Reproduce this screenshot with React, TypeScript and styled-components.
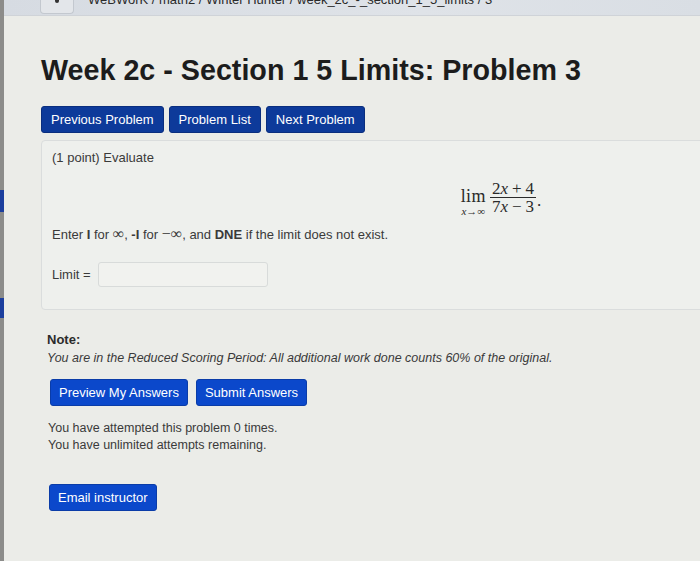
import styled, { createGlobalStyle } from "styled-components";

const GlobalStyle = createGlobalStyle`
  html, body {
    margin: 0;
    padding: 0;
    overflow: hidden;
  }
  body {
    width: 700px;
    height: 561px;
    background: #ebece8;
    font-family: "Liberation Sans", Arial, sans-serif;
    color: #3a3a3a;
  }
`;

const Page = styled.div`
  display: flex;
  height: 561px;
`;

const Gutter = styled.div`
  flex: none;
  width: 4px;
  background: linear-gradient(
    to bottom,
    #8c8c8a 0 190px,
    #1c3f9e 190px 212px,
    #8c8c8a 212px 298px,
    #1c3f9e 298px 318px,
    #8c8c8a 318px
  );
`;

const Column = styled.div`
  flex: 1;
  min-width: 0;
  display: flex;
  flex-direction: column;
`;

const TopBar = styled.div`
  height: 15px;
  flex: none;
  display: flex;
  align-items: flex-start;
  padding-left: 36px;
  overflow: hidden;
  background: linear-gradient(to right, #d6dbe2, #dfe3e8 60%, #d9dee4);
  box-shadow: 0 1px 0 #cfd3d8;
`;

const BarButton = styled.div`
  flex: none;
  width: 32px;
  height: 13px;
  display: flex;
  justify-content: center;
  background: #e3e6ea;
  border: 1px solid #c3c8cf;
  border-top: none;
  border-radius: 0 0 4px 4px;
`;

const BarGlyph = styled.span`
  width: 4px;
  height: 3px;
  background: #333;
  border-radius: 0 0 2px 2px;
`;

const Crumb = styled.div`
  margin-left: 14px;
  margin-top: -7px;
  font-size: 13px;
  line-height: 13px;
  white-space: nowrap;
  color: #2a2a2a;
`;

const Content = styled.div`
  width: 920px;
  padding-left: 37px;
`;

const Title = styled.h1`
  margin: 37px 0 0;
  font-size: 28.7px;
  line-height: 36px;
  font-weight: bold;
  color: #1c1c1c;
`;

const ButtonRow = styled.div<{ $top: number; $indent?: number; $gap?: number }>`
  display: flex;
  gap: ${(p) => p.$gap ?? 5}px;
  margin-top: ${(p) => p.$top}px;
  padding-left: ${(p) => p.$indent ?? 0}px;
`;

const Button = styled.button<{ $tone: "nav" | "action" }>`
  height: 27px;
  padding: 0 ${(p) => (p.$tone === "nav" ? 9 : 8)}px;
  font-family: "Liberation Sans", Arial, sans-serif;
  font-size: 13px;
  color: #fff;
  border-radius: 3px;
  cursor: pointer;
  background: ${(p) => (p.$tone === "nav" ? "#0d3a9a" : "#0b48cb")};
  border: 1px solid ${(p) => (p.$tone === "nav" ? "#0a2e7e" : "#0a3ca8")};
`;

const ProblemBox = styled.div`
  margin-top: 7px;
  height: 170px;
  box-sizing: border-box;
  padding: 8px 10px;
  background: #eef0ed;
  border: 1px solid #dadddd;
  border-radius: 4px;
`;

const Line = styled.div<{ $top?: number }>`
  font-size: 13px;
  line-height: 18px;
  margin-top: ${(p) => p.$top ?? 0}px;
  white-space: nowrap;
`;

const MathDisplay = styled.div`
  display: flex;
  justify-content: center;
  align-items: flex-start;
  height: 36px;
  margin-top: 13px;
  font-family: "Liberation Serif", "Times New Roman", serif;
  color: #2a2a2a;
`;

const LimBlock = styled.div`
  display: flex;
  flex-direction: column;
  align-items: center;
  margin-top: 9px;
  margin-right: 3px;
`;

const Lim = styled.span`
  font-size: 18px;
  line-height: 15px;
  letter-spacing: 0.4px;
`;

const Sub = styled.span`
  font-size: 11px;
  line-height: 12px;
  margin-top: 1px;
`;

const Fraction = styled.div`
  display: flex;
  flex-direction: column;
  align-items: stretch;
  text-align: center;
  padding: 0 1px;
`;

const FracPart = styled.span<{ $bar?: boolean }>`
  font-size: 17px;
  line-height: 17px;
  padding: 0 2px;
  border-top: ${(p) => (p.$bar ? "1px solid #2a2a2a" : "none")};
`;

const Op = styled.span`
  margin: 0 4px;
`;

const Period = styled.span`
  font-size: 17px;
  margin-top: 11px;
`;

const Var = styled.i`
  font-family: "Liberation Serif", serif;
`;

const Sym = styled.span`
  font-family: "Liberation Serif", "DejaVu Serif", serif;
  font-size: 16px;
`;

const LimitRow = styled.div`
  display: flex;
  align-items: center;
  gap: 7px;
  margin-top: 18px;
  font-size: 13px;
`;

const AnswerInput = styled.input`
  width: 170px;
  height: 25px;
  box-sizing: border-box;
  background: #f1f2ef;
  border: 1px solid #d8dbda;
  border-radius: 3px;
`;

const Footer = styled.div`
  padding-left: 6px;
`;

const Note = styled.div`
  margin-top: 21px;
  font-size: 13px;
  line-height: 18px;
  font-weight: bold;
  color: #2b2b2b;
`;

const Italic = styled.div`
  font-size: 12.5px;
  line-height: 18px;
  font-style: italic;
  white-space: nowrap;
`;

const Attempts = styled.div`
  margin-top: 14px;
  font-size: 12.5px;
  line-height: 17px;
  padding-left: 1px;
`;

export default function App() {
  return (
    <>
      <GlobalStyle />
      <Page>
        <Gutter />
        <Column>
          <TopBar>
            <BarButton>
              <BarGlyph />
            </BarButton>
            <Crumb>WeBWorK / math2 / Winter Hunter / week_2c_-_section_1_5_limits / 3</Crumb>
          </TopBar>
          <Content>
            <Title>Week 2c - Section 1 5 Limits: Problem 3</Title>
            <ButtonRow $top={18}>
              <Button $tone="nav">Previous Problem</Button>
              <Button $tone="nav">Problem List</Button>
              <Button $tone="nav">Next Problem</Button>
            </ButtonRow>
            <ProblemBox>
              <Line>(1 point) Evaluate</Line>
              <MathDisplay>
                <LimBlock>
                  <Lim>lim</Lim>
                  <Sub>
                    <Var>x</Var>→∞
                  </Sub>
                </LimBlock>
                <Fraction>
                  <FracPart>
                    2<Var>x</Var>
                    <Op>+</Op>4
                  </FracPart>
                  <FracPart $bar>
                    7<Var>x</Var>
                    <Op>−</Op>3
                  </FracPart>
                </Fraction>
                <Period>.</Period>
              </MathDisplay>
              <Line $top={9}>
                Enter <b>I</b> for <Sym>∞</Sym>, <b>-I</b> for <Sym>−∞</Sym>, and <b>DNE</b> if the limit
                does not exist.
              </Line>
              <LimitRow>
                <span>Limit =</span>
                <AnswerInput />
              </LimitRow>
            </ProblemBox>
            <Footer>
              <Note>Note:</Note>
              <Italic>
                You are in the Reduced Scoring Period: All additional work done counts 60% of the
                original.
              </Italic>
              <ButtonRow $top={12} $indent={3} $gap={8}>
                <Button $tone="action">Preview My Answers</Button>
                <Button $tone="action">Submit Answers</Button>
              </ButtonRow>
              <Attempts>
                You have attempted this problem 0 times.
                <br />
                You have unlimited attempts remaining.
              </Attempts>
              <ButtonRow $top={30} $indent={2}>
                <Button $tone="action">Email instructor</Button>
              </ButtonRow>
            </Footer>
          </Content>
        </Column>
      </Page>
    </>
  );
}
